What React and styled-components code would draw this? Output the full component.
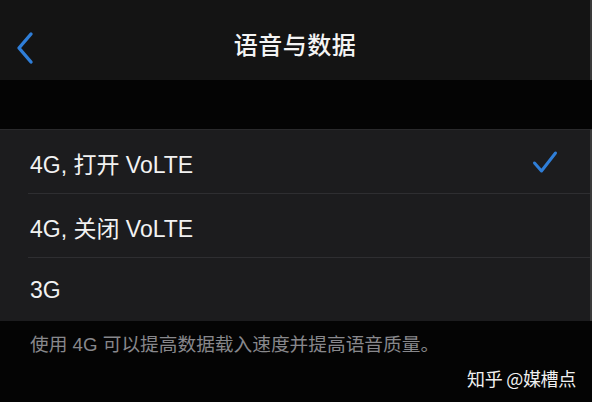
import React from 'react';
import styled, { createGlobalStyle } from 'styled-components';

const GlobalStyle = createGlobalStyle`
  html, body {
    margin: 0;
    padding: 0;
    background: #040404;
  }
  body {
    font-family: "Liberation Sans", "Noto Sans CJK SC", sans-serif;
    -webkit-font-smoothing: antialiased;
  }
`;

const Screen = styled.div`
  width: 592px;
  height: 402px;
  display: flex;
  flex-direction: column;
  background: #040404;
  overflow: hidden;
`;

const NavBar = styled.header`
  height: 80px;
  flex-shrink: 0;
  display: grid;
  grid-template-columns: 1fr auto 1fr;
  align-items: center;
  background: #141414;
  border-right: 2px solid #3a3a3a;
  box-sizing: border-box;
`;

const BackButton = styled.button`
  justify-self: start;
  display: flex;
  align-items: center;
  margin: 16px 0 0 14px;
  padding: 0;
  border: 0;
  background: none;
  color: #2f7ed8;
`;

const Title = styled.h1`
  margin: 6px 0 0;
  font-family: "Noto Sans CJK SC", sans-serif;
  font-size: 24px;
  font-weight: 500;
  color: #f4f4f4;
  letter-spacing: 0.5px;
`;

const Band = styled.div`
  height: 49px;
  flex-shrink: 0;
`;

const List = styled.ul`
  margin: 0;
  padding: 0;
  list-style: none;
  background: #1c1c1e;
  border-top: 1px solid #2a2a2c;
  border-right: 2px solid #3a3a3a;
`;

const Row = styled.li`
  padding-left: 28px;
`;

const RowInner = styled.div`
  height: 63px;
  display: flex;
  align-items: center;
  justify-content: space-between;
  padding: 0 32px 0 2px;
  border-bottom: ${p => (p.$last ? 'none' : '1px solid #2e2e31')};
`;

const RowLabel = styled.span`
  font-size: 23px;
  color: #f2f2f2;
  margin-top: 2px;
`;

const Footnote = styled.p`
  margin: 0;
  padding: 12px 0 0 30px;
  font-size: 18.7px;
  line-height: 24px;
  color: #88888c;
`;

const Watermark = styled.div`
  align-self: flex-end;
  margin: 8px 16px 0 0;
  font-family: "Noto Sans CJK SC", sans-serif;
  font-size: 18px;
  letter-spacing: -0.3px;
  color: #f0f0f0;
`;

const Chevron = () => (
  <svg width="22" height="34" viewBox="0 0 22 34" fill="none">
    <path
      d="M17 3 L5 17 L17 31"
      stroke="currentColor"
      strokeWidth="3.4"
      strokeLinecap="round"
      strokeLinejoin="round"
    />
  </svg>
);

const Check = () => (
  <svg width="26" height="24" viewBox="0 0 26 24" fill="none">
    <path
      d="M2.5 13 L9.5 21 L23.5 3"
      stroke="#2f7ed8"
      strokeWidth="3"
      strokeLinecap="round"
      strokeLinejoin="round"
    />
  </svg>
);

const options = [
  { label: '4G, 打开 VoLTE', selected: true },
  { label: '4G, 关闭 VoLTE' },
  { label: '3G' },
];

const App = () => (
  <>
    <GlobalStyle />
    <Screen>
      <NavBar>
        <BackButton aria-label="返回">
          <Chevron />
        </BackButton>
        <Title>语音与数据</Title>
        <span />
      </NavBar>
      <Band />
      <List>
        {options.map((opt, i) => (
          <Row key={opt.label}>
            <RowInner $last={i === options.length - 1}>
              <RowLabel>{opt.label}</RowLabel>
              {opt.selected && <Check />}
            </RowInner>
          </Row>
        ))}
      </List>
      <Footnote>使用 4G 可以提高数据载入速度并提高语音质量。</Footnote>
      <Watermark>知乎 @媒槽点</Watermark>
    </Screen>
  </>
);

export default App;
